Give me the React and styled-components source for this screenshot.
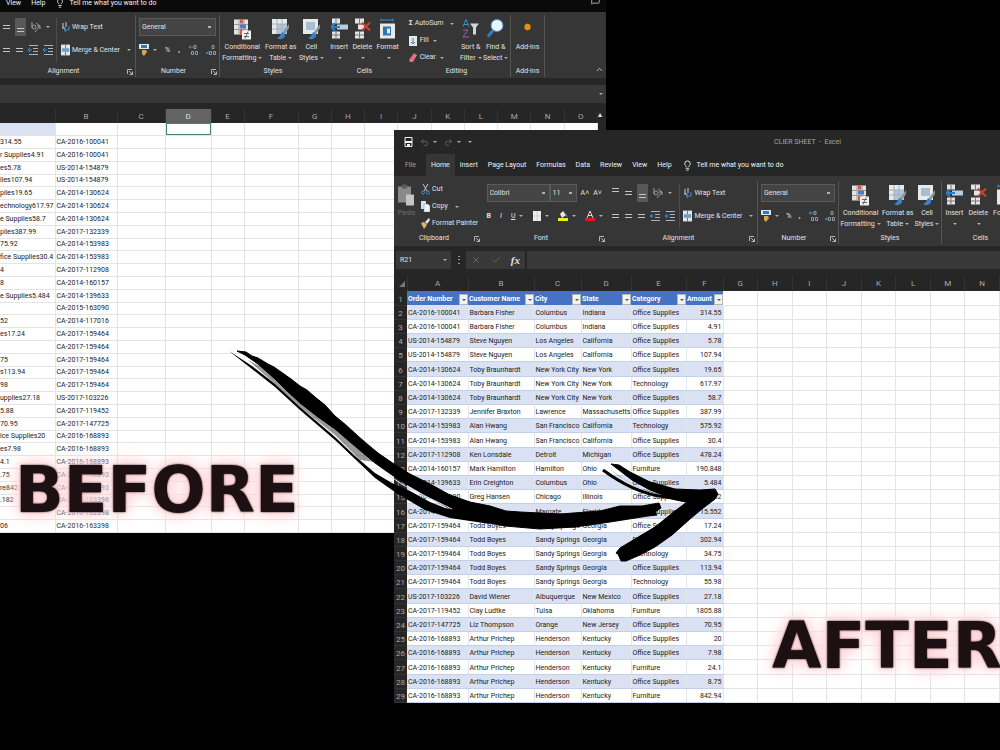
import React from 'react'
import styled, {createGlobalStyle, css} from "styled-components";
import {Lightbulb, Undo2, Redo2, X, Check, MessageSquare, ChevronUp} from "lucide-react";

const beforeRows = [
  ["314.55", "CA-2016-100041"],
  ["r Supplies4.91", "CA-2016-100041"],
  ["es5.78", "US-2014-154879"],
  ["lies107.94", "US-2014-154879"],
  ["plies19.65", "CA-2014-130624"],
  ["echnology617.97", "CA-2014-130624"],
  ["e Supplies58.7", "CA-2014-130624"],
  ["plies387.99", "CA-2017-132339"],
  ["75.92", "CA-2014-153983"],
  ["fice Supplies30.4", "CA-2014-153983"],
  ["4", "CA-2017-112908"],
  ["8", "CA-2014-160157"],
  ["e Supplies5.484", "CA-2014-139633"],
  ["", "CA-2015-163090"],
  ["52", "CA-2014-117016"],
  ["es17.24", "CA-2017-159464"],
  ["", "CA-2017-159464"],
  ["75", "CA-2017-159464"],
  ["s113.94", "CA-2017-159464"],
  ["98", "CA-2017-159464"],
  ["upplies27.18", "US-2017-103226"],
  ["5.88", "CA-2017-119452"],
  ["70.95", "CA-2017-147725"],
  ["ice Supplies20", "CA-2016-168893"],
  ["es7.98", "CA-2016-168893"],
  ["4.1", "CA-2016-168893"],
  [".75", "CA-2016-168893"],
  ["re842.94", "CA-2016-168893"],
  [".182", "CA-2016-163398"],
  ["", "CA-2016-163398"],
  ["06", "CA-2016-163398"],
];

const afterRows = [
  ["CA-2016-100041", "Barbara Fisher", "Columbus", "Indiana", "Office Supplies", "314.55"],
  ["CA-2016-100041", "Barbara Fisher", "Columbus", "Indiana", "Office Supplies", "4.91"],
  ["US-2014-154879", "Steve Nguyen", "Los Angeles", "California", "Office Supplies", "5.78"],
  ["US-2014-154879", "Steve Nguyen", "Los Angeles", "California", "Office Supplies", "107.94"],
  ["CA-2014-130624", "Toby Braunhardt", "New York City", "New York", "Office Supplies", "19.65"],
  ["CA-2014-130624", "Toby Braunhardt", "New York City", "New York", "Technology", "617.97"],
  ["CA-2014-130624", "Toby Braunhardt", "New York City", "New York", "Office Supplies", "58.7"],
  ["CA-2017-132339", "Jennifer Braxton", "Lawrence", "Massachusetts", "Office Supplies", "387.99"],
  ["CA-2014-153983", "Alan Hwang", "San Francisco", "California", "Technology", "575.92"],
  ["CA-2014-153983", "Alan Hwang", "San Francisco", "California", "Office Supplies", "30.4"],
  ["CA-2017-112908", "Ken Lonsdale", "Detroit", "Michigan", "Office Supplies", "478.24"],
  ["CA-2014-160157", "Mark Hamilton", "Hamilton", "Ohio", "Furniture", "190.848"],
  ["CA-2014-139633", "Erin Creighton", "Columbus", "Ohio", "Office Supplies", "5.484"],
  ["CA-2015-163090", "Greg Hansen", "Chicago", "Illinois", "Office Supplies", "9.552"],
  ["CA-2014-117016", "Todd Boyd", "Margate", "Florida", "Office Supplies", "15.552"],
  ["CA-2017-159464", "Todd Boyes", "Sandy Springs", "Georgia", "Office Supplies", "17.24"],
  ["CA-2017-159464", "Todd Boyes", "Sandy Springs", "Georgia", "Furniture", "302.94"],
  ["CA-2017-159464", "Todd Boyes", "Sandy Springs", "Georgia", "Technology", "34.75"],
  ["CA-2017-159464", "Todd Boyes", "Sandy Springs", "Georgia", "Office Supplies", "113.94"],
  ["CA-2017-159464", "Todd Boyes", "Sandy Springs", "Georgia", "Technology", "55.98"],
  ["US-2017-103226", "David Wiener", "Albuquerque", "New Mexico", "Office Supplies", "27.18"],
  ["CA-2017-119452", "Clay Ludtke", "Tulsa", "Oklahoma", "Furniture", "1805.88"],
  ["CA-2017-147725", "Liz Thompson", "Orange", "New Jersey", "Office Supplies", "70.95"],
  ["CA-2016-168893", "Arthur Prichep", "Henderson", "Kentucky", "Office Supplies", "20"],
  ["CA-2016-168893", "Arthur Prichep", "Henderson", "Kentucky", "Office Supplies", "7.98"],
  ["CA-2016-168893", "Arthur Prichep", "Henderson", "Kentucky", "Furniture", "24.1"],
  ["CA-2016-168893", "Arthur Prichep", "Henderson", "Kentucky", "Office Supplies", "8.75"],
  ["CA-2016-168893", "Arthur Prichep", "Henderson", "Kentucky", "Furniture", "842.94"],
];

const beforeCols = [["", 55], ["B", 62], ["C", 48], ["D", 46], ["E", 33], ["F", 54], ["G"], ["H"], ["I"], ["J"], ["K"], ["L"], ["M"], ["N"], ["O"]];
const afterCols = [["A", 61], ["B", 66], ["C", 47], ["D", 50], ["E", 55], ["F", 37], ["G"], ["H"], ["I"], ["J"], ["K"], ["L"], ["M"], ["N"]];
const afterHead = ["Order Number", "Customer Name", "City", "State", "Category", "Amount"];

const Lines = ({at = "middle"}) => {
  const y = {top: 1, middle: 4, bottom: 7}[at];
  return (
    <svg width="9" height="12" viewBox="0 0 9 12" stroke="#c4c4c4">
      <path d={`M1 ${y + .5}h7M1 ${y + 3.5}h7`}/>
    </svg>
  )
}

const Indent = () => (
  <svg width="11" height="12" viewBox="0 0 11 12">
    <path d="M1 1.500h9M5 4.500h5M5 7.500h5M1 10.500h9" stroke="#a9b4bd"/>
    <path d="M0 6h4M2 4l-2 2 2 2" stroke="#3b8fd1" fill="none"/>
  </svg>
)

const Angle = () => (
  <svg width="12" height="12" viewBox="0 0 12 12" fill="none" stroke="#9a9a9a">
    <circle cx="4" cy="6" r="2"/>
    <path d="M2 1v6M6 2l4 3-5 6M7 5h3v3"/>
  </svg>
)

const WrapIcon = () => (
  <svg width="9" height="11" viewBox="0 0 9 11" fill="none">
    <path d="M2 1v5M5 0v5M1 6h3" stroke="#cfcfcf"/>
    <path d="M8 4v4H3M5 6L3 8l2 2" stroke="#3b8fd1"/>
  </svg>
)

const MergeIcon = () => (
  <svg width="9" height="12" viewBox="0 0 10 12">
    <path d="M0 0h10v12H0z" fill="#e2e8ec"/>
    <path d="M1 4h8v4H1z" fill="#6f9fc4"/>
    <path d="M5 0v4M5 8v4" stroke="#666"/>
  </svg>
)

const Currency = () => (
  <svg width="10" height="12" viewBox="0 0 10 12">
    <path d="M0 0h10v5H0z" fill="#d8e8f4"/>
    <path d="M2 1h6v3H2z" fill="#3579b1"/>
    <path d="M3 6h4l1 2-3 4-2-2z" fill="#d9a54a"/>
  </svg>
)

const Decimal = ({flip}) => (
  <svg width="10" height="12" viewBox="0 0 10 12">
    <path d="M6 1.500h2v3H6zM3.500 7.500h2v3h-2zM7.500 7.500h2v3h-2z" fill="none" stroke="#8d9aa4"/>
    <path d={flip ? "M0 9h3M2 7.500L.5 9 2 10.500" : "M1 3h4M2.500 1.500L1 3l1.500 1.500"} fill="none" stroke="#3b8fd1"/>
  </svg>
)

const Conditional = () => (
  <svg width="17" height="21" viewBox="0 0 17 21">
    <path d="M0 1h14v15H0z" fill="#dfe3e6"/>
    <path d="M5 1v15M10 1v15M0 6h14M0 11h14" stroke="#999"/>
    <path d="M6 1h3v4H6zM6 11h3v5H6z" fill="#d65a43"/>
    <path d="M6 6h6v4H6z" fill="#4b7fc0"/>
    <path d="M8 12h9v9H8z" fill="#f1f1f1"/>
    <path d="M10 15h5M10 18h5M14 13l-3 7" stroke="#666"/>
  </svg>
)

const FormatTable = ({cell}) => (
  <svg width="17" height="22" viewBox="0 0 17 22">
    <path d="M0 1h15v15H0z" fill="#e6e9eb"/>
    {cell
      ? <path d="M3 4h9v8H3z" fill="#a9bdd0"/>
      : <path d="M5 1v15M10 1v15M0 6h15M0 11h15" stroke="#a5afb8"/>}
    {!cell && <path d="M5 6h10v10H5z" fill="#9db3c8" opacity=".7"/>}
    <path d="M17 6l-6 8 2 2 4-6z" fill="#8c959c"/>
    <path d="M11 14c-3 1-2 5-6 6 4 3 9 0 8-4z" fill="#3b82c4"/>
  </svg>
)

const InsertIcon = () => (
  <svg width="17" height="21" viewBox="0 0 17 21">
    <path d="M1 0h8v5H1zM1 13h8v7H1z" fill="#e4e4e4"/>
    <path d="M5 0v5M5 13v7M1 16.500h8" stroke="#777"/>
    <path d="M6 6h11v5H6z" fill="#b9cde0"/>
    <path d="M0 8.500h9M4 5L0 8.500 4 12" stroke="#2f7fc4" strokeWidth="2" fill="none"/>
  </svg>
)

const DeleteIcon = () => (
  <svg width="17" height="21" viewBox="0 0 17 21">
    <path d="M1 0h9v5H1zM4 6h6v5H4zM1 13h9v7H1z" fill="#e4e4e4"/>
    <path d="M5.500 0v5M5.500 13v7M1 16.500h9" stroke="#777"/>
    <path d="M8 4l8 8M16 4l-8 8" stroke="#c6462f" strokeWidth="2"/>
  </svg>
)

const FormatIcon = () => (
  <svg width="17" height="21" viewBox="0 0 17 21">
    <path d="M2 1.500h12M2 0v3M14 0v3" stroke="#3b8fd1"/>
    <path d="M1 5h15v15H1z" fill="#e9e9e9"/>
    <path d="M4 8h8v9H4z" fill="#2f74b5"/>
    <path d="M8 10h3v5H8z" fill="#e9e9e9"/>
  </svg>
)

const SortIcon = () => (
  <svg width="17" height="21" viewBox="0 0 17 21" fill="none">
    <path d="M1 8l3-7 3 7M2 6h4" stroke="#3b8fd1"/>
    <path d="M1 11.500h5l-5 7h6" stroke="#a05ab8"/>
    <path d="M8 5h9l-3 4v7h-3V9z" fill="#d5d5d5"/>
  </svg>
)

const FindIcon = () => (
  <svg width="17" height="21" viewBox="0 0 17 21">
    <path d="M6 12l-5 6" stroke="#2f7fc4" strokeWidth="3"/>
    <circle cx="10" cy="7" r="6" fill="#eaf4fc" stroke="#3b8fd1"/>
  </svg>
)

const AddinIcon = () => (
  <svg width="17" height="21" viewBox="0 0 17 21">
    <path d="M8.500 5l3 1.500v4l-3 1.500-3-1.500v-4z" fill="#e8920c"/>
  </svg>
)

const PasteIcon = () => (
  <svg width="17" height="21" viewBox="0 0 17 21">
    <path d="M0 2h13v16H0z" fill="#8a8a8a"/>
    <path d="M4 0h5v4H4z" fill="#5c5c5c"/>
    <path d="M8 10h8v11H8z" fill="#c5c5c5"/>
  </svg>
)

const CutIcon = () => (
  <svg width="9" height="11" viewBox="0 0 9 11" fill="none">
    <path d="M2 0l4 7M7 0L3 7" stroke="#c9c9c9"/>
    <circle cx="2" cy="8.500" r="1.500" stroke="#3b8fd1"/>
    <circle cx="7" cy="8.500" r="1.500" stroke="#3b8fd1"/>
  </svg>
)

const CopyIcon = () => (
  <svg width="9" height="11" viewBox="0 0 9 11">
    <path d="M0 0h5v8H0z" fill="#dbe3e9"/>
    <path d="M3 3h4l2 2v6H3z" fill="#f4f4f4" stroke="#5b8fb8" strokeWidth=".5"/>
  </svg>
)

const PainterIcon = () => (
  <svg width="9" height="11" viewBox="0 0 9 11">
    <path d="M4 4L8 0l1 2-3 4z" fill="#e6e6e6"/>
    <path d="M0 5l3-1 3 3-3 4z" fill="#e0b370"/>
  </svg>
)

const SaveIcon = () => (
  <svg width="9" height="10" viewBox="0 0 9 10">
    <path d="M1 .5h7v9H1z" fill="none" stroke="#f2f2f2"/>
    <path d="M1 4h7v2H1zM3 7h3v3H3z" fill="#f2f2f2"/>
  </svg>
)

const BorderIcon = () => (
  <svg width="9" height="10" viewBox="0 0 9 10">
    <path d="M1 0h8v10H1z" fill="#ececec"/>
    <path d="M5 0v10M1 5h8" stroke="#cfcfcf"/>
  </svg>
)

const FillIcon = () => (
  <svg width="10" height="12" viewBox="0 0 10 12">
    <path d="M2 4l3-3 3 4-4 3z" fill="#e6e6e6"/>
    <path d="M8 4l1 3" stroke="#3b8fd1"/>
    <path d="M0 8h10v3H0z" fill="#f4ea1c"/>
  </svg>
)

const FontColorIcon = () => (
  <svg width="10" height="12" viewBox="0 0 10 12">
    <path d="M2 8l3-7 3 7M3 5.500h4" stroke="#d9d9d9" fill="none"/>
    <path d="M0 8h10v3H0z" fill="#e01b1b"/>
  </svg>
)

const FillDown = () => (
  <svg width="9" height="10" viewBox="0 0 9 10">
    <path d="M0 0h8v10H0z" fill="#e6e6e6"/>
    <path d="M4 2v6M2 6l2 2 2-2" stroke="#2f7fc4" fill="none"/>
  </svg>
)

const EraserIcon = () => (
  <svg width="9" height="10" viewBox="0 0 9 10">
    <path d="M0 7l5-7 3 2-4 7H1z" fill="#e0708a"/>
  </svg>
)

const Launcher = () => (
  <LauncherButton aria-label="More options">
    <svg width="6" height="6" viewBox="0 0 6 6" fill="none" stroke="#b5b5b5">
      <path d="M.5 5V.5H5M2 2l3.500 3.500M5.500 2.500v3h-3"/>
    </svg>
  </LauncherButton>
)

const Section = ({title, width, launcher, line, children}) => (
  <Group $width={width} $line={line}>
    <GroupBody>{children}</GroupBody>
    <Caption><span>{title}</span>{launcher && <Launcher/>}</Caption>
  </Group>
)

const Big = ({icon, top, bottom, caret = true}) => (
  <BigButton>
    {icon}
    <span>{top}</span>
    <span>{bottom}{caret && <Caret/>}</span>
  </BigButton>
)

const Alignment = ({width, cropped}) => (
  <Section title="Alignment" width={width} launcher line>
    <Stack $pad={cropped ? 0 : 2}>
      <Tools $gap={4}>
        {!cropped && <Tool aria-label="Top align"><Lines at="top"/></Tool>}
        <Tool aria-label="Middle align"><Lines/></Tool>
        <Tool aria-label="Bottom align" $active><Lines at="bottom"/></Tool>
        <Tool aria-label="Orientation"><Angle/><Caret/></Tool>
      </Tools>
      <Tools $gap={4}>
        {!cropped && <Tool aria-label="Align left"><Lines/></Tool>}
        <Tool aria-label="Center"><Lines/></Tool>
        <Tool aria-label="Align right"><Lines/></Tool>
        <Tool aria-label="Decrease indent"><Indent/></Tool>
        <Tool aria-label="Increase indent"><Indent/></Tool>
      </Tools>
    </Stack>
    <Rule/>
    <Stack $pad={2}>
      <Tools><Tool><WrapIcon/>Wrap Text</Tool></Tools>
      <Tools><Tool><MergeIcon/>Merge &amp; Center<Caret $gap/></Tool></Tools>
    </Stack>
  </Section>
)

const NumberGroup = ({width}) => (
  <Section title="Number" width={width} launcher line>
    <Stack $pad={2} $grow>
      <Picker aria-label="Number format" defaultValue="General"><option>General</option></Picker>
      <Tools $between>
        <Tool aria-label="Accounting format"><Currency/><Caret/></Tool>
        <Tool>%</Tool>
        <Tool><b>,</b></Tool>
        <Tool aria-label="Increase decimal"><Decimal/></Tool>
        <Tool aria-label="Decrease decimal"><Decimal flip/></Tool>
      </Tools>
    </Stack>
  </Section>
)

const Styles = ({width, line}) => (
  <Section title="Styles" width={width} line={line}>
    <Big icon={<Conditional/>} top="Conditional" bottom="Formatting"/>
    <Big icon={<FormatTable/>} top="Format as" bottom="Table"/>
    <Big icon={<FormatTable cell/>} top="Cell" bottom="Styles"/>
  </Section>
)

const Cells = ({width}) => (
  <Section title="Cells" width={width}>
    <Big icon={<InsertIcon/>} top="Insert"/>
    <Big icon={<DeleteIcon/>} top="Delete"/>
    <Big icon={<FormatIcon/>} top="Format"/>
  </Section>
)

const Headings = ({cols, selected, corner}) => (
  <>
    <colgroup>
      {corner && <col width="13"/>}
      {cols.map(([name, width]) => <col key={name} width={width}/>)}
    </colgroup>
    <thead>
      <tr>
        {corner && <Heading $tall><Corner/></Heading>}
        {cols.map(([name]) => <Heading key={name} $tall={corner} $on={name === selected}>{name}</Heading>)}
      </tr>
    </thead>
  </>
)

const BeforeWindow = () => (
  <Window $place={beforePlace}>
    <Tabs $crop>
      <Tab>View</Tab>
      <Tab>Help</Tab>
      <Tab><Lightbulb size={10}/>Tell me what you want to do</Tab>
      <Comment aria-label="Comments"><MessageSquare size={9}/></Comment>
    </Tabs>
    <Ribbon>
      <Alignment width={136} cropped/>
      <NumberGroup width={84}/>
      <Styles width={107}/>
      <Cells width={76}/>
      <Section title="Editing" width={108} line>
        <Stack $pad={4} $tight>
          <Tool><b>Σ</b>AutoSum<Caret $gap/></Tool>
          <Tool><FillDown/>Fill<Caret/></Tool>
          <Tool><EraserIcon/>Clear<Caret/></Tool>
        </Stack>
        <Big icon={<SortIcon/>} top="Sort &" bottom="Filter"/>
        <Big icon={<FindIcon/>} top="Find &" bottom="Select"/>
      </Section>
      <Section title="Add-ins" width={34} line>
        <Big icon={<AddinIcon/>} top="Add-ins" caret={false}/>
      </Section>
      <Collapse aria-label="Collapse ribbon"><ChevronUp size={9}/></Collapse>
    </Ribbon>
    <FormulaBar>
      <Formula aria-label="Formula"/>
      <Expand aria-label="Expand formula bar"><Caret/></Expand>
    </FormulaBar>
    <SheetArea>
      <Sheet>
        <Headings cols={beforeCols} selected="D"/>
        <tbody>
          <tr>
            {beforeCols.map(([name]) => <Cell key={name} $tint={name === ""} $picked={name === "D"}/>)}
          </tr>
          {beforeRows.map((row, i) => (
            <tr key={i}>
              {beforeCols.map(([name], c) => <Cell key={name} $flush={c === 0}>{row[c]}</Cell>)}
            </tr>
          ))}
        </tbody>
      </Sheet>
      <Scroll><button aria-label="Scroll up">▴</button></Scroll>
    </SheetArea>
  </Window>
)

const AfterWindow = () => (
  <Window $place={afterPlace}>
    <TitleBar>
      <Tool aria-label="Save"><SaveIcon/></Tool>
      <Tool aria-label="Undo" $dim><Undo2 size={9}/><Caret/></Tool>
      <Tool aria-label="Redo" $dim><Redo2 size={9}/><Caret/></Tool>
      <Tool aria-label="Customize"><Caret $none/></Tool>
      <Title>CLIER SHEET  -  Excel</Title>
    </TitleBar>
    <Tabs>
      {["File", "Home", "Insert", "Page Layout", "Formulas", "Data", "Review", "View", "Help"].map((name) => (
        <Tab key={name} $active={name === "Home"} $dim={name === "File"}>{name}</Tab>
      ))}
      <Tab><Lightbulb size={11}/>Tell me what you want to do</Tab>
    </Tabs>
    <Ribbon $tall>
      <Section title="Clipboard" width={89} launcher>
        <Faded><Big icon={<PasteIcon/>} top="Paste"/></Faded>
        <Stack $tight>
          <Tool><CutIcon/>Cut</Tool>
          <Tool><CopyIcon/>Copy<Caret $gap/></Tool>
          <Tool><PainterIcon/>Format Painter</Tool>
        </Stack>
      </Section>
      <Section title="Font" width={125} launcher>
        <Stack>
          <Tools $gap={4}>
            <Pickers>
              <Picker aria-label="Font" $width={63} defaultValue="Colibri"><option>Colibri</option></Picker>
              <Picker aria-label="Font size" $width={27} defaultValue="11"><option>11</option></Picker>
            </Pickers>
            <Tool>A˄</Tool>
            <Tool>A˅</Tool>
          </Tools>
          <Tools $gap={9}>
            <Tool><b>B</b></Tool>
            <Tool><i>I</i></Tool>
            <Tool><u>U</u><Caret/></Tool>
            <Tool aria-label="Borders"><BorderIcon/><Caret/></Tool>
            <Tool aria-label="Fill colour"><FillIcon/><Caret/></Tool>
            <Tool aria-label="Font colour"><FontColorIcon/><Caret/></Tool>
          </Tools>
        </Stack>
      </Section>
      <Alignment width={150}/>
      <NumberGroup width={81}/>
      <Styles width={103} line/>
      <Cells width={78}/>
    </Ribbon>
    <FormulaBar $low>
      <NameBox><input aria-label="Name box" defaultValue="R21"/><Caret/></NameBox>
      <Dots>⋮</Dots>
      <FormulaTools>
        <Tool aria-label="Cancel" $dim><X size={10}/></Tool>
        <Tool aria-label="Enter" $dim><Check size={10}/></Tool>
        <Tool><Fx>fx</Fx></Tool>
      </FormulaTools>
      <Formula aria-label="Formula"/>
    </FormulaBar>
    <SheetArea>
      <Sheet>
        <Headings cols={afterCols} corner/>
        <tbody>
          <tr>
            <RowNumber>1</RowNumber>
            {afterCols.map(([name], c) => c < 6
              ? (
                <FieldCell key={name}>
                  <Field>{afterHead[c]}<Filter aria-label={`Filter ${afterHead[c]}`}><Caret/></Filter></Field>
                </FieldCell>
              )
              : <Cell key={name}/>)}
          </tr>
          {afterRows.map((row, i) => (
            <tr key={i}>
              <RowNumber>{i + 2}</RowNumber>
              {afterCols.map(([name], c) => (
                <Cell key={name} $table={c < 6} $tint={c < 6 && i % 2 === 0} $right={c === 5}>{row[c]}</Cell>
              ))}
            </tr>
          ))}
        </tbody>
      </Sheet>
    </SheetArea>
  </Window>
)

const App = () => {
  return (
    <Stage>
      <GlobalStyle/>
      <BeforeWindow/>
      <AfterWindow/>
      <Label $x={15} $y={454}>BEFORE</Label>
      <Label $x={772} $y={610}>AFTER</Label>
      <Arrow viewBox="0 0 520 230" aria-hidden="true">
        <g transform="translate(-220 -340)" stroke="#000" strokeLinejoin="round">
          <path d="M248 360L275 374 300 402 335 428 375 462 360 460 335 435 300 407 275 384z" fill="#000" stroke="none" opacity=".4"/>
          <path d="M237 351L246 352 252 356 258 358 268 364 274 367 284 374 291 379 300 386 307 390 315 397 325 405 335 416 346 425 358 436 366 443 378 453 394 464 410 474 430 484 450 495 470 502 490 506 506 511 520 512 560 514 600 511 620 506 642 506 659 503 661 508 655 512 657 515 648 516 610 522 575 527 540 529 505 526 480 521 462 514 445 506 425 495 408 485 392 475 375 463 356 447 335 429 318 417 300 403 286 390 275 379 258 364 245 355z" strokeWidth="1"/>
          <path d="M229 351L252 366 275 384 300 407 335 437 355 456 375 473 392 483 410 491 430 502 445 508 470 512 490 524 470 521 450 518 425 510 408 500 392 490 375 478 355 459 335 440 300 410 275 387 252 369z" stroke="none"/>
          <path d="M388 475L405 486 425 496 452 509" stroke="#ddd" fill="none"/>
          <path d="M603 470C622 484 640 493 660 496S685 502 695 502" fill="none" strokeWidth="3"/>
          <path d="M607 467L620 477 640 488 665 496 690 500 650 493 625 480z" fill="#777" stroke="none"/>
          <path d="M611 464L619 465 630 472 650 482 675 489 700 490 715 489 718 494 715 499 702 509 690 519 672 535 655 547 640 555 626 561 621 561 618 554 616 553 620 548 635 539 655 527 675 511 687 502 668 497 650 490 632 480z" strokeWidth="1"/>
        </g>
      </Arrow>
    </Stage>
  )
}

const beforePlace = css`
    left: 0;
    top: 0;
    right: 394px;
    bottom: 217px;
`;

const afterPlace = css`
    left: 394px;
    top: 130px;
    right: 0;
    bottom: 47px;
`;

const GlobalStyle = createGlobalStyle`
    * {
        box-sizing: border-box;
    }

    body {
        margin: 0;
        background: #000;
        font-family: Roboto, "Liberation Sans", sans-serif;
    }

    button, input, select {
        font: inherit;
        color: inherit;
        background: none;
        border: 0;
        padding: 0;
        margin: 0;
    }
`;

const Stage = styled.main`
    position: relative;
    height: 100vh;
    overflow: hidden;
    background: #000;
`;

const Window = styled.section`
    position: absolute;
    ${({$place}) => $place}
    display: flex;
    flex-direction: column;
    overflow: hidden;
    background: #262626;
    color: #e2e2e2;
    font-size: 7px;
    line-height: 11px;
`;

const TitleBar = styled.header`
    display: flex;
    align-items: center;
    gap: 7px;
    height: 24px;
    padding-left: 10px;
`;

const Title = styled.h1`
    flex: 1;
    margin: 0;
    padding-left: 136px;
    text-align: center;
    font-size: 7px;
    font-weight: 400;
    color: #a5a5a5;
    white-space: pre;
`;

const Tabs = styled.nav`
    display: flex;
    flex: none;
    height: 22px;
    padding-left: 1px;

    ${({$crop}) => $crop && css`
        height: 12px;
        align-items: flex-end;
        background: #0a0a0a;

        button {
            height: 19px;
        }
    `}
`;

const Tab = styled.button`
    display: flex;
    align-items: center;
    gap: 4px;
    padding: 1px ${({$dim}) => $dim ? 10 : 5}px 0;
    white-space: nowrap;
    color: ${({$dim}) => $dim ? "#a0a0a0" : "#f2f2f2"};
    background: ${({$active}) => $active ? "#363636" : "none"};
`;

const Comment = styled.button`
    margin-left: auto;
    padding-right: 6px;
`;

const Ribbon = styled.div`
    display: flex;
    flex: none;
    height: ${({$tall}) => $tall ? 70 : 66}px;
    padding: ${({$tall}) => $tall ? "2px 0 1px" : "0"};
    background: #363636;
`;

const Group = styled.div`
    display: flex;
    flex: none;
    flex-direction: column;
    width: ${({$width}) => $width}px;
    margin: 3px 0 1px;
    border-right: 1px solid ${({$line}) => $line ? "#555" : "transparent"};
`;

const GroupBody = styled.div`
    display: flex;
    flex: 1;
    justify-content: space-around;
    padding: 3px 1px 0;
`;

const Caption = styled.div`
    display: flex;
    height: 11px;

    span {
        flex: 1;
        text-align: center;
    }
`;

const LauncherButton = styled.button`
    display: flex;
    align-items: center;
    padding-right: 2px;
`;

const Stack = styled.div`
    display: flex;
    flex: ${({$grow}) => $grow ? 1 : "none"};
    flex-direction: column;
    gap: ${({$tight}) => $tight ? 6 : 5}px;
    padding: 0 ${({$pad}) => $pad || 0}px;
`;

const Tools = styled.div`
    display: flex;
    align-items: center;
    gap: ${({$gap}) => $gap || 2}px;
    height: 18px;
    justify-content: ${({$between}) => $between ? "space-between" : "flex-start"};
`;

const Tool = styled.button`
    display: flex;
    align-items: center;
    gap: 2px;
    min-height: 11px;
    white-space: nowrap;
    color: ${({$dim}) => $dim ? "#6f6f6f" : "inherit"};

    ${({$active}) => $active && css`
        height: 18px;
        padding: 0 1px;
        background: #585858;
    `}
`;

const Caret = styled.span`
    display: inline-block;
    vertical-align: middle;
    margin-left: ${({$gap, $none}) => $none ? 0 : $gap ? 5 : 2}px;
    border: 2px solid transparent;
    border-top-color: #b0b0b0;
    border-bottom-width: 0;
`;

const Pickers = styled.div`
    display: flex;
`;

const Picker = styled.select`
    appearance: none;
    width: ${({$width}) => $width ? `${$width}px` : "100%"};
    height: 18px;
    padding: 0 2px;
    border: 1px solid #5a5a5a;
    background: linear-gradient(#b0b0b0, #b0b0b0) right 4px center / 3px 2px no-repeat #444;
`;

const Rule = styled.div`
    width: 1px;
    margin-bottom: 4px;
    background: #4c4c4c;
`;

const BigButton = styled.button`
    display: flex;
    flex-direction: column;
    align-items: center;
    white-space: nowrap;

    svg {
        height: 22px;
        margin-bottom: 2px;
    }

    span {
        min-height: 2px;
    }
`;

const Faded = styled.div`
    display: flex;

    span {
        opacity: .3;
    }
`;

const Collapse = styled.button`
    align-self: flex-end;
    margin-left: auto;
    padding-right: 2px;
`;

const FormulaBar = styled.div`
    display: flex;
    flex: none;
    padding: ${({$low}) => $low ? "5px 0 7px" : "7px 0 6px"};
`;

const NameBox = styled.div`
    display: flex;
    align-items: center;
    width: 55px;
    margin-left: 2px;
    padding: 0 4px;
    background: #383838;

    input {
        flex: 1;
        min-width: 0;
    }
`;

const Dots = styled.span`
    width: 15px;
    text-align: center;
    font-size: 10px;
    line-height: 18px;
`;

const FormulaTools = styled.div`
    display: flex;
    justify-content: space-around;
    width: 59px;
    margin-right: 2px;
    background: #383838;
`;

const Fx = styled.i`
    font: italic bold 11px "Liberation Serif", serif;
`;

const Formula = styled.input`
    flex: 1;
    min-width: 0;
    height: 18px;
    background: #383838 !important;
`;

const Expand = styled.button`
    width: 12px;
    background: #383838 !important;
`;

const SheetArea = styled.div`
    display: flex;
    flex: 1;
    min-height: 0;
`;

const Sheet = styled.table`
    flex: 1;
    width: 100%;
    height: 100%;
    table-layout: fixed;
    border-collapse: collapse;
    background: #fff;
    font-size: 7px;
    line-height: 11px;
    color: #222;
`;

const Heading = styled.th`
    height: ${({$tall}) => $tall ? 15 : 14}px;
    padding: 0;
    font-weight: 400;
    font-size: 8px;
    color: ${({$on}) => $on ? "#d5e5dc" : "#a8a8a8"};
    background: ${({$on}) => $on ? "#636363" : "#262626"};
    border-right: 1px solid #333;
`;

const Corner = styled.div`
    width: 0;
    margin-left: 5px;
    border: 3px solid #777;
    border-top-color: transparent;
    border-left-color: transparent;
`;

const Cell = styled.td`
    height: 12px;
    padding: ${({$flush}) => $flush ? "0" : "0 1px"};
    overflow: hidden;
    vertical-align: bottom;
    white-space: nowrap;
    text-align: ${({$right}) => $right ? "right" : "left"};
    background: ${({$tint}) => $tint ? "#d9e1f2" : "#fff"};
    border: 1px solid ${({$table}) => $table ? "#c3d0ea" : "#e4e4e4"};
    border-width: 0 1px 1px 0;

    ${({$table}) => $table && css`
        border-right-color: #e2e6ee;
    `}

    ${({$picked}) => $picked && css`
        box-shadow: inset 0 0 0 1px #3f8a63;
    `}
`;

const RowNumber = styled.th`
    padding: 0;
    vertical-align: bottom;
    font-weight: 400;
    font-size: 8px;
    color: #a8a8a8;
    background: #262626;
    border-bottom: 1px solid #333;
`;

const FieldCell = styled.th`
    padding: 0 0 0 1px;
    color: #fff;
    background: #4472c4;
    vertical-align: bottom;
    text-align: left;
    white-space: nowrap;
`;

const Field = styled.div`
    display: flex;
    align-items: center;
    justify-content: space-between;
`;

const Filter = styled.button`
    display: flex;
    flex: none;
    align-items: center;
    justify-content: center;
    width: 9px;
    height: 11px;
    background: #f3f3f3;
    border: 1px solid #b5b5b5;

    span {
        margin: 0;
        border-top-color: #555;
    }
`;

const Scroll = styled.div`
    flex: none;
    width: 8px;
    font-size: 8px;
`;

const Label = styled.h2`
    position: absolute;
    left: ${({$x}) => $x}px;
    top: ${({$y}) => $y}px;
    margin: 0;
    font: bold 64px/72px "DejaVu Sans", sans-serif;
    color: #1c1013;
    text-shadow: 0 0 2px #1c1013, 0 0 10px #ffd2d6, 0 0 16px #ffd2d6, 0 0 22px #ffe4e6;
`;

const Arrow = styled.svg`
    position: absolute;
    left: 220px;
    top: 340px;
    width: 520px;
    height: 230px;
    pointer-events: none;
`;

export default App
